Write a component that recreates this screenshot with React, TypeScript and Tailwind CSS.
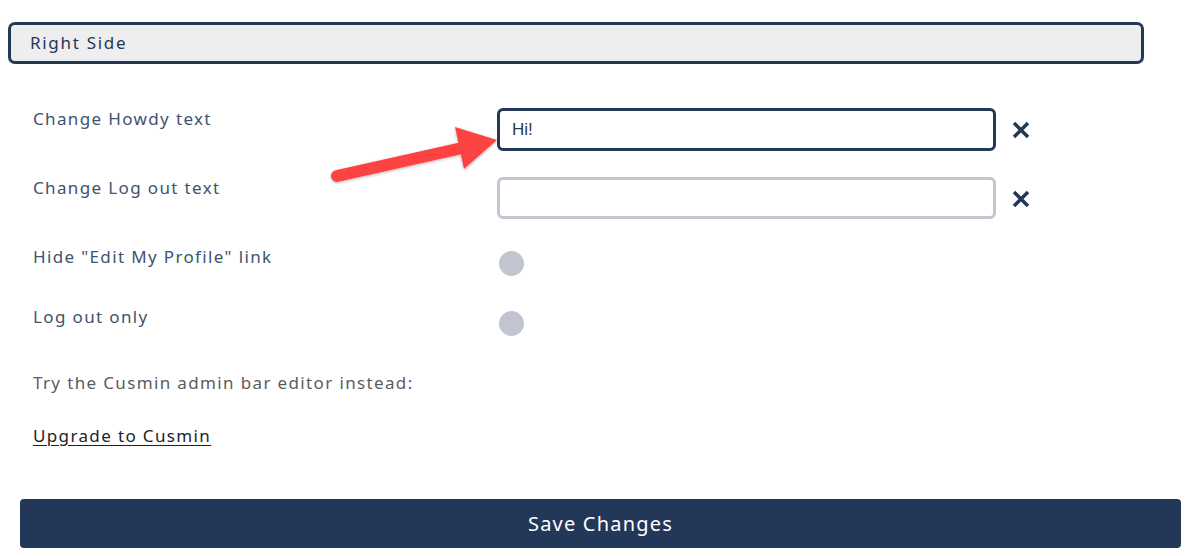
import { useState } from "react";

const font = { fontFamily: '"Noto Sans", "Liberation Sans", sans-serif' };

function CloseIcon() {
  return (
    <svg width="18" height="18" viewBox="0 0 18 18" className="shrink-0">
      <path d="M2 2 L16 16 M16 2 L2 16" stroke="#233856" strokeWidth="3.5" strokeLinecap="butt" />
    </svg>
  );
}

export default function App() {
  const [howdy, setHowdy] = useState("Hi!");
  const [logout, setLogout] = useState("");

  return (
    <div className="relative w-[1189px] h-[556px] bg-white overflow-hidden" style={font}>
      <div className="pt-[22px] pl-2 w-[1144px]">
        <div className="h-[42px] border-[3px] border-[#233856] rounded-[7px] bg-[#eeeeee] flex items-center pl-[19px] text-[17px] tracking-[0.1em] text-[#233856]">
          Right Side
        </div>
      </div>

      <div className="pl-[33px] pt-[44px] text-[17px] tracking-[0.08em] leading-[22px]">
        <div className="flex h-[42px]">
          <div className="w-[464px] text-[#40536f]">Change Howdy text</div>
          <input
            value={howdy}
            onChange={(e) => setHowdy(e.target.value)}
            className="w-[499px] h-[43px] border-[3px] border-[#233856] rounded-[6px] px-[12px] text-[17px] tracking-normal text-[#2c3a4f] outline-none"
            style={{ fontFamily: '"Liberation Sans", Arial, sans-serif' }}
          />
          <div className="ml-[16px] mt-[13px]">
            <CloseIcon />
          </div>
        </div>

        <div className="flex h-[42px] mt-[27px]">
          <div className="w-[464px] text-[#40536f]">Change Log out text</div>
          <input
            value={logout}
            onChange={(e) => setLogout(e.target.value)}
            className="w-[499px] h-[42px] border-[3px] border-[#c1c6d1] rounded-[6px] px-[12px] text-[17px] outline-none"
          />
          <div className="ml-[16px] mt-[13px]">
            <CloseIcon />
          </div>
        </div>

        <div className="flex mt-[27px] h-[40px]">
          <div className="w-[466px] text-[#40536f]">Hide "Edit My Profile" link</div>
          <div className="w-[25px] h-[25px] rounded-full bg-[#c0c5d1] mt-[5px]" />
        </div>

        <div className="flex mt-[20px] h-[40px]">
          <div className="w-[466px] text-[#40536f]">Log out only</div>
          <div className="w-[25px] h-[25px] rounded-full bg-[#c0c5d1] mt-[5px]" />
        </div>

        <div className="mt-[26px] text-[#5c5c5c]">Try the Cusmin admin bar editor instead:</div>

        <div className="mt-[31px]">
          <a href="#" className="text-[#1d2327] underline underline-offset-[3px]">
            Upgrade to Cusmin
          </a>
        </div>
      </div>

      <div className="pl-[20px] pt-[52px] w-[1181px]">
        <button className="w-full h-[49px] bg-[#233858] rounded-[4px] text-white text-[20px] tracking-[0.06em]">
          Save Changes
        </button>
      </div>

      <svg className="absolute left-0 top-0 pointer-events-none" width="1189" height="556">
        <defs>
          <filter id="sh" x="-20%" y="-50%" width="140%" height="200%">
            <feDropShadow dx="0" dy="1" stdDeviation="1.5" floodColor="#000" floodOpacity="0.3" />
          </filter>
        </defs>
        <g filter="url(#sh)">
          <line x1="337" y1="176" x2="462" y2="148" stroke="#fd4343" strokeWidth="12" strokeLinecap="round" />
          <polygon points="455,127 497,140 464,169" fill="#fd4343" />
        </g>
      </svg>
    </div>
  );
}
